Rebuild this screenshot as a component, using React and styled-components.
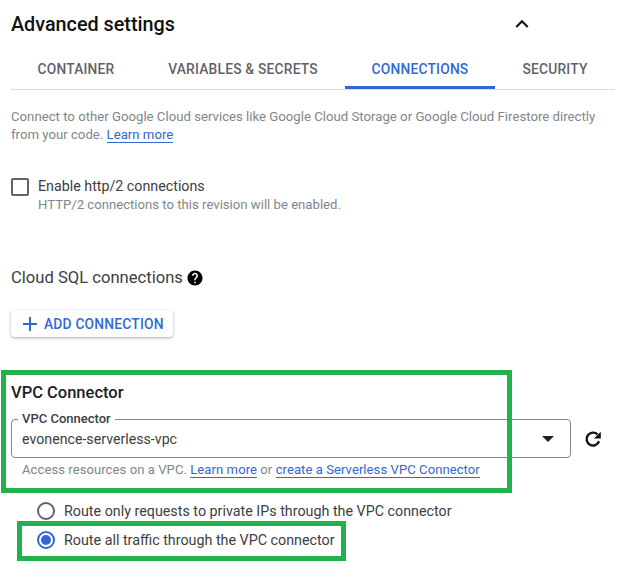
import React from "react";
import styled, { createGlobalStyle } from "styled-components";

const Global = createGlobalStyle`
  html, body { margin: 0; padding: 0; background: #fff; }
  body { font-family: Roboto, "Liberation Sans", sans-serif; color: #202124; }
  a { color: #3367d6; text-decoration: none; border-bottom: 1px solid #3367d6; }
`;
const Page = styled.div`
  position: relative;
  width: 634px;
  height: 573px;
  overflow: hidden;
  padding: 12px 0 0 11px;
  box-sizing: border-box;
`;
const Header = styled.div`
  display: flex;
  align-items: center;
  justify-content: space-between;
  width: 524px;
  height: 24px;
`;
const Title = styled.h2`
  margin: 0;
  font-size: 19.8px;
  font-weight: 500;
  color: #111;
`;
const Tabs = styled.div`
  display: flex;
  width: 604px;
  height: 48px;
  margin-top: 5px;
  border-bottom: 1px solid #dadce0;
  box-sizing: content-box;
`;
const Tab = styled.div`
  display: flex;
  align-items: center;
  justify-content: center;
  width: ${p => p.$w}px;
  height: 48px;
  padding-top: 7px;
  box-sizing: border-box;
  font-size: 13.8px;
  font-weight: 500;
  letter-spacing: 0.2px;
  color: ${p => (p.$active ? "#3367d6" : "#5f6368")};
  box-shadow: ${p => (p.$active ? "inset 0 -3px 0 #3367d6" : "none")};
`;
const Intro = styled.p`
  margin: 18px 0 0;
  width: 604px;
  font-size: 13.2px;
  line-height: 18px;
  color: #80868b;
`;
const CheckRow = styled.label`
  display: flex;
  gap: 9px;
  margin-top: 33px;
`;
const Box = styled.span`
  width: 14px;
  height: 14px;
  margin-top: 1px;
  border: 2px solid #5f6368;
  border-radius: 2px;
  flex: none;
`;
const CheckText = styled.div`
  font-size: 14.25px;
  line-height: 19px;
  color: #3c4043;
`;
const Hint = styled.div`
  font-size: 13.15px;
  line-height: 17px;
  color: #80868b;
`;
const SqlHead = styled.div`
  display: flex;
  align-items: center;
  gap: 3px;
  margin-top: 55px;
  font-size: 16.6px;
  line-height: 20px;
  color: #3c4043;
`;
const AddButton = styled.button`
  display: flex;
  align-items: center;
  gap: 6px;
  margin-top: 22px;
  height: 27px;
  width: 162px;
  padding: 0 0 0 11px;
  border: none;
  border-radius: 4px;
  background: #fff;
  box-shadow: 0 1px 3px rgba(60, 64, 67, 0.45);
  font: 500 13.8px Roboto, sans-serif;
  letter-spacing: 0.2px;
  color: #3367d6;
`;
const SectionTitle = styled.h3`
  margin: 46px 0 0;
  font-size: 16.5px;
  line-height: 20px;
  font-weight: 500;
  color: #202124;
`;
const SelectRow = styled.div`
  display: flex;
  align-items: center;
  gap: 11px;
  margin-top: 16px;
`;
const Field = styled.div`
  position: relative;
  display: flex;
  align-items: center;
  justify-content: space-between;
  width: 560px;
  height: 39px;
  box-sizing: border-box;
  padding: 0 16px 0 10px;
  border: 1px solid #80868b;
  border-radius: 4px;
  font-size: 14.2px;
  color: #3c4043;
`;
const Legend = styled.span`
  position: absolute;
  left: 6px;
  top: -8px;
  padding: 0 4px;
  background: #fff;
  font-size: 13px;
  line-height: 14px;
  font-weight: 500;
  color: #3c4043;
`;
const Caret = styled.span`
  width: 0;
  height: 0;
  border-left: 6px solid transparent;
  border-right: 6px solid transparent;
  border-top: 6px solid #202124;
`;
const Helper = styled.div`
  margin: 3px 0 0 11px;
  font-size: 13.1px;
  line-height: 18px;
  color: #80868b;
  letter-spacing: 0.05px;
`;
const Radios = styled.div`
  display: flex;
  flex-direction: column;
  gap: 9px;
  margin: 22px 0 0 26px;
`;
const RadioRow = styled.label`
  display: flex;
  align-items: center;
  gap: 9px;
  height: 20px;
  font-size: 14.3px;
  color: #3c4043;
`;
const Radio = styled.span`
  display: flex;
  align-items: center;
  justify-content: center;
  width: 18px;
  height: 18px;
  box-sizing: border-box;
  border-radius: 50%;
  border: 2px solid ${p => (p.$on ? "#3367d6" : "#5f6368")};
  &::after {
    content: "";
    display: ${p => (p.$on ? "block" : "none")};
    width: 10px;
    height: 10px;
    border-radius: 50%;
    background: #3367d6;
  }
`;
const Highlight = styled.div`
  position: absolute;
  box-sizing: border-box;
  border: ${p => p.$b}px solid #22b14c;
  left: ${p => p.$x}px;
  top: ${p => p.$y}px;
  width: ${p => p.$w}px;
  height: ${p => p.$h}px;
  pointer-events: none;
`;

export default function App() {
  return (
    <Page>
      <Global />
      <Header>
        <Title>Advanced settings</Title>
        <svg width="26" height="26" viewBox="0 0 24 24" fill="#111">
          <path d="M12 8l-6 6 1.41 1.41L12 10.83l4.59 4.58L18 14z" />
        </svg>
      </Header>
      <Tabs>
        <Tab $w={130}>CONTAINER</Tab>
        <Tab $w={204}>VARIABLES &amp; SECRETS</Tab>
        <Tab $w={150} $active>CONNECTIONS</Tab>
        <Tab $w={120}>SECURITY</Tab>
      </Tabs>
      <Intro>
        Connect to other Google Cloud services like Google Cloud Storage or Google Cloud Firestore directly
        from your code. <a>Learn more</a>
      </Intro>
      <CheckRow>
        <Box />
        <div>
          <CheckText>Enable http/2 connections</CheckText>
          <Hint>HTTP/2 connections to this revision will be enabled.</Hint>
        </div>
      </CheckRow>
      <SqlHead>
        Cloud SQL connections
        <svg width="18" height="18" viewBox="0 0 24 24" fill="#000">
          <path d="M12 2C6.48 2 2 6.48 2 12s4.48 10 10 10 10-4.48 10-10S17.52 2 12 2zm1 17h-2v-2h2v2zm2.07-7.75l-.9.92C13.45 12.9 13 13.5 13 15h-2v-.5c0-1.1.45-2.1 1.17-2.83l1.24-1.26c.37-.36.59-.86.59-1.41 0-1.1-.9-2-2-2s-2 .9-2 2H8c0-2.21 1.79-4 4-4s4 1.79 4 4c0 .88-.36 1.68-.93 2.25z" />
        </svg>
      </SqlHead>
      <AddButton>
        <svg width="16" height="16" viewBox="0 0 16 16" fill="#3367d6">
          <path d="M7 1h2v6h6v2H9v6H7V9H1V7h6z" />
        </svg>
        ADD CONNECTION
      </AddButton>
      <SectionTitle>VPC Connector</SectionTitle>
      <SelectRow>
        <Field>
          <Legend>VPC Connector</Legend>
          evonence-serverless-vpc
          <Caret />
        </Field>
        <svg width="22" height="22" viewBox="0 0 24 24" fill="none" stroke="#111" strokeWidth="2.6">
          <path d="M18.6 14.5A7 7 0 1 1 16.9 7" />
          <path d="M20.5 4v7.5H13z" fill="#111" stroke="none" />
        </svg>
      </SelectRow>
      <Helper>
        Access resources on a VPC. <a>Learn more</a> or <a>create a Serverless VPC Connector</a>
      </Helper>
      <Radios>
        <RadioRow><Radio />Route only requests to private IPs through the VPC connector</RadioRow>
        <RadioRow><Radio $on />Route all traffic through the VPC connector</RadioRow>
      </Radios>
      <Highlight $b={5} $x={1} $y={370} $w={511} $h={123} />
      <Highlight $b={5} $x={17} $y={521} $w={329} $h={40} />
    </Page>
  );
}
